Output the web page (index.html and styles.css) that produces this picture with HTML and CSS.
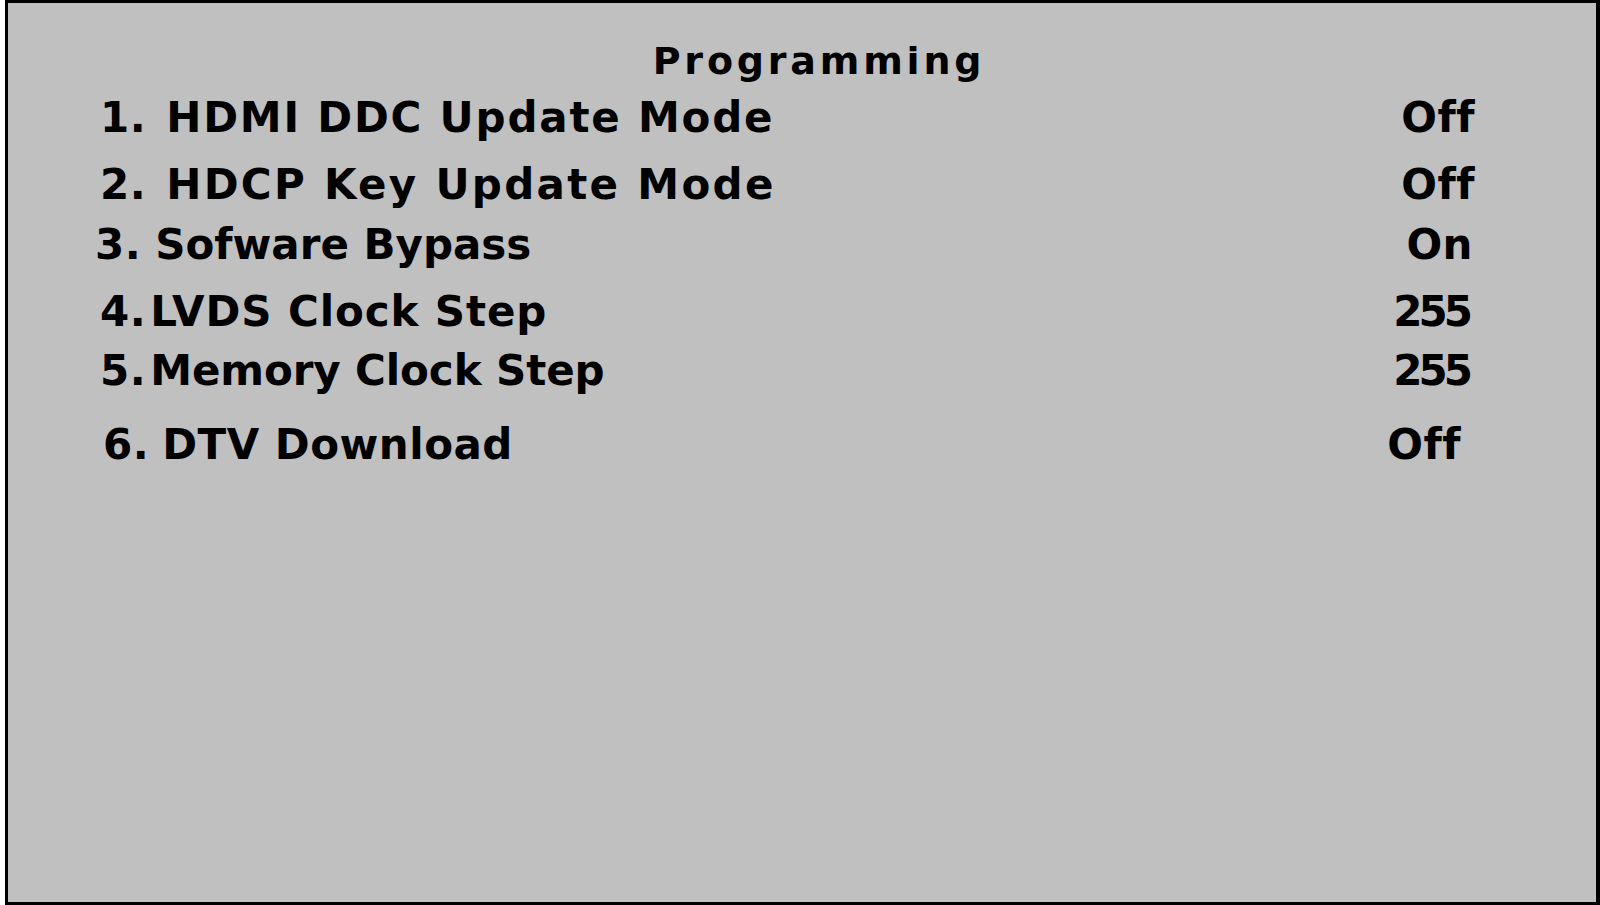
FILE: index.html
```html
<!DOCTYPE html>
<html>
<head>
<meta charset="utf-8">
<link rel="stylesheet" href="styles.css">
</head>
<body>
<div class="screen">
  <div class="title">Programming</div>
  <div class="menu">
    <div class="row r1"><span class="num">1.</span><span class="label">HDMI DDC Update Mode</span><span class="value">Off</span></div>
    <div class="row r2"><span class="num">2.</span><span class="label">HDCP Key Update Mode</span><span class="value">Off</span></div>
    <div class="row r3"><span class="num">3.</span><span class="label">Sofware Bypass</span><span class="value">On</span></div>
    <div class="row r4"><span class="num">4.</span><span class="label">LVDS Clock Step</span><span class="value digits">255</span></div>
    <div class="row r5"><span class="num">5.</span><span class="label">Memory Clock Step</span><span class="value digits">255</span></div>
    <div class="row r6"><span class="num">6.</span><span class="label">DTV Download</span><span class="value">Off</span></div>
  </div>
</div>
</body>
</html>
```
FILE: styles.css
```css
html, body {
  margin: 0;
  padding: 0;
  background: #ffffff;
}
body {
  width: 1600px;
  height: 905px;
  overflow: hidden;
}
.screen {
  box-sizing: border-box;
  margin-left: 5px;
  width: 1595px;
  height: 905px;
  border-top: 3px solid #000;
  border-left: 3px solid #000;
  border-right: 4px solid #000;
  border-bottom: 3px solid #000;
  background: #c0c0c0;
  color: #000;
  font-family: "DejaVu Sans", Verdana, sans-serif;
  font-weight: bold;
  padding-top: 38px;
}
.title {
  font-size: 38px;
  line-height: 40px;
  height: 40px;
  letter-spacing: 3.8px;
  text-align: center;
  padding-left: 34px;
}
.menu {
  margin-top: 7px;
  display: flex;
  flex-direction: column;
}
.row {
  display: flex;
  align-items: baseline;
  font-size: 42px;
  line-height: 60px;
  height: 60px;
  padding-left: 92px;
  letter-spacing: 0.5px;
}
.label {
  flex: 1;
}
.value {
  text-align: right;
  width: 200px;
}
.digits {
  letter-spacing: -4px;
}
.r1 .label {
  margin-left: 20px;
  letter-spacing: 1.8px;
}
.r2 .label {
  margin-left: 20px;
  letter-spacing: 2.3px;
}
.r1 .value, .r2 .value { margin-right: 121px; }
.r2 { margin-top: 7px; }
.r3 { padding-left: 87px; }
.r3 .label { margin-left: 14px; letter-spacing: 0; }
.r3 .value { margin-right: 123px; }
.r4 { margin-top: 7px; }
.r4 .label { margin-left: 4px; letter-spacing: 0.9px; }
.r5 .label { margin-left: 4px; letter-spacing: -0.1px; }
.r4 .value, .r5 .value { margin-right: 127px; }
.r5 { margin-top: -1px; }
.r6 { margin-top: 14px; padding-left: 95px; }
.r6 .label { margin-left: 13px; }
.r6 .value { margin-right: 135px; }
```
